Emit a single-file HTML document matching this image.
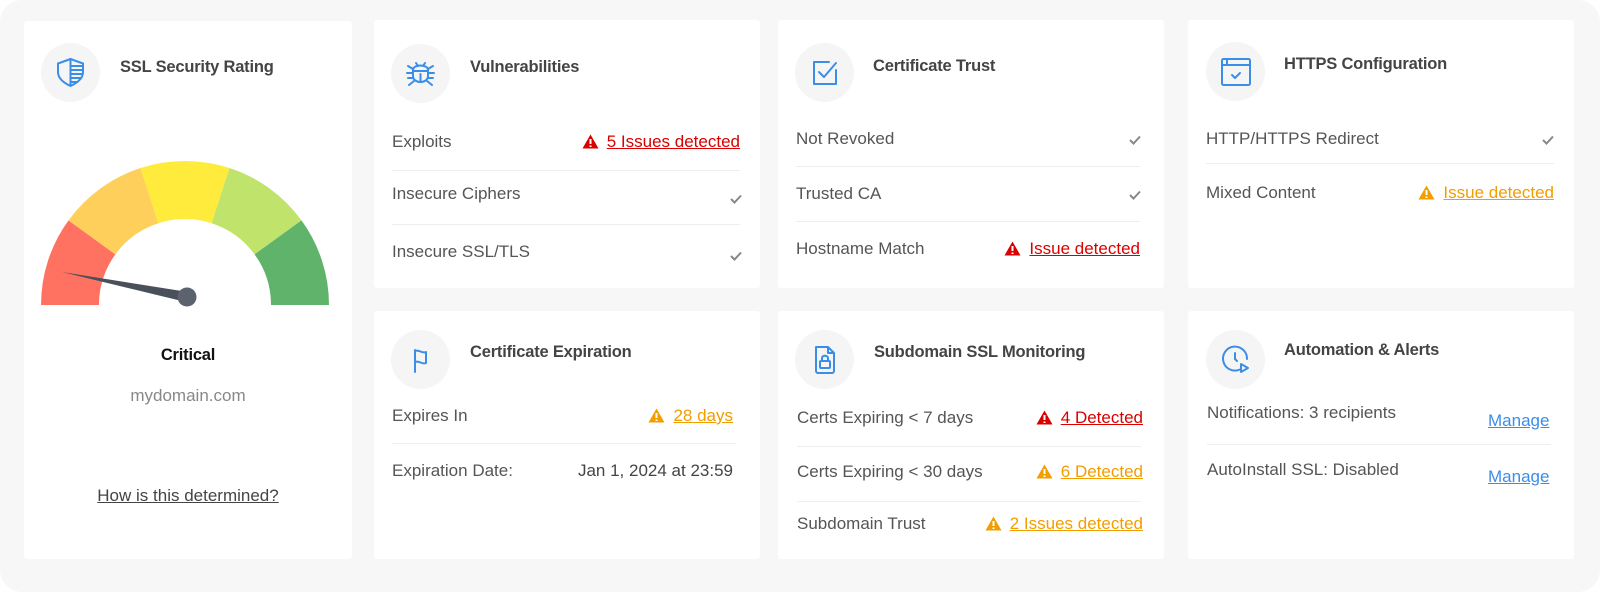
<!DOCTYPE html>
<html><head><meta charset="utf-8"><style>
*{margin:0;padding:0;box-sizing:border-box}
body{width:1600px;height:592px;background:#fff;font-family:"Liberation Sans",Arial,sans-serif;position:relative;overflow:hidden}
.bg{position:absolute;left:0;top:0;width:1600px;height:592px;background:#f7f7f7;border-radius:22px}
.card{position:absolute;background:#fff;border-radius:3px}
.t{position:absolute;height:22px;line-height:22px;font-size:17px;color:#555;white-space:nowrap}
.h{font-weight:bold;color:#444;font-size:16.5px;letter-spacing:-0.2px}
.circ{position:absolute;width:59px;height:59px;border-radius:50%;background:#f5f5f5}
.circ svg{position:absolute;left:14px;top:14px}
.div{position:absolute;height:1px;background:#eee}
.r{text-align:right}
.red{color:#d90000;text-decoration:underline}
.org{color:#f29d00;text-decoration:underline}
.blu{color:#3b8ee8;text-decoration:underline}
.ck{position:absolute;width:12px;height:10px}
.tri{display:inline-block;vertical-align:-2px;margin-right:8px}
</style></head><body>
<div class="bg"></div>

<!-- Card 1 -->
<div class="card" style="left:24px;top:21px;width:328px;height:538px"></div>
<div class="circ" style="left:41px;top:43px"><svg width="31" height="31" viewBox="0 0 31 31" fill="none" stroke="#3b8ee8" stroke-width="2"><path d="M15.5 2 L3 6.5 V15 C3 21.5 9 26 15.5 29 C22 26 28 21.5 28 15 V6.5 Z"/><path d="M15.5 2 V29 M15.5 9H28 M15.5 13H28 M15.5 17H27.5 M15.5 21H26 M15.5 25H22"/></svg></div>
<div class="t h" style="left:120px;top:56px">SSL Security Rating</div>
<svg style="position:absolute;left:0;top:0" width="360" height="320">
<g transform="translate(185,305)">
<path d="M-144 0 A144 144 0 0 1 -116.5 -84.6 L-69.6 -50.6 A86 86 0 0 0 -86 0Z" fill="#ff7262"/>
<path d="M-116.5 -84.6 A144 144 0 0 1 -44.5 -137 L-26.6 -81.8 A86 86 0 0 0 -69.6 -50.6Z" fill="#ffcf5c"/>
<path d="M-44.5 -137 A144 144 0 0 1 44.5 -137 L26.6 -81.8 A86 86 0 0 0 -26.6 -81.8Z" fill="#ffeb3b"/>
<path d="M44.5 -137 A144 144 0 0 1 116.5 -84.6 L69.6 -50.6 A86 86 0 0 0 26.6 -81.8Z" fill="#bfe36b"/>
<path d="M116.5 -84.6 A144 144 0 0 1 144 0 L86 0 A86 86 0 0 0 69.6 -50.6Z" fill="#5fb36b"/>
</g>
<path d="M62 272 L188 292 L186 302 Z" fill="#4a505a"/>
<circle cx="187" cy="297" r="9.5" fill="#5d636e"/>
</svg>
<div class="t h" style="left:24px;width:328px;top:344px;text-align:center;color:#111">Critical</div>
<div class="t" style="left:24px;width:328px;top:385px;text-align:center;color:#888">mydomain.com</div>
<div class="t" style="left:24px;width:328px;top:485px;text-align:center;color:#444;text-decoration:underline">How is this determined?</div>

<!-- Card 2 -->
<div class="card" style="left:374px;top:20px;width:386px;height:268px"></div>
<div class="circ" style="left:391px;top:44px"><svg width="31" height="31" viewBox="0 0 31 31" fill="none" stroke="#3b8ee8" stroke-width="2" stroke-linecap="round"><path d="M8 12 C8 6 23 6 23 12 V18 C23 26 8 26 8 18 Z"/><path d="M8 13H23 M15.5 16V24 M11 5 L13 8 M20 5 L18 8 M8 15H2 M23 15H29 M8 20H3 M23 20H28 M9 23 L4 27 M22 23 L27 27 M8 11 L3 8 M23 11 L28 8"/></svg></div>
<div class="t h" style="left:470px;top:56px">Vulnerabilities</div>
<div class="t" style="left:392px;top:131px">Exploits</div>
<div class="t r" style="left:520px;width:220px;top:131px"><svg class="tri" width="17" height="15" viewBox="0 0 17 15"><path d="M8.5 0.5 L16.5 14.5 H0.5Z" fill="#d90000"/><path d="M8.5 5V10M8.5 11.5V13" stroke="#fff" stroke-width="2"/></svg><span class="red">5 Issues detected</span></div>
<div class="div" style="left:392px;width:348px;top:170px"></div>
<div class="t" style="left:392px;top:183px">Insecure Ciphers</div>
<svg class="ck" style="left:730px;top:194px" viewBox="0 0 12 10"><path d="M1 5 L4.5 8.5 L11 1.5" stroke="#888" stroke-width="2" fill="none"/></svg>
<div class="div" style="left:392px;width:348px;top:224px"></div>
<div class="t" style="left:392px;top:241px">Insecure SSL/TLS</div>
<svg class="ck" style="left:730px;top:251px" viewBox="0 0 12 10"><path d="M1 5 L4.5 8.5 L11 1.5" stroke="#888" stroke-width="2" fill="none"/></svg>

<!-- Card 3 -->
<div class="card" style="left:778px;top:20px;width:386px;height:268px"></div>
<div class="circ" style="left:795px;top:43px"><svg width="31" height="31" viewBox="0 0 31 31" fill="none" stroke="#3b8ee8" stroke-width="2" stroke-linecap="round" stroke-linejoin="round"><path d="M20 5 H5 V27 H27 V13"/><path d="M10 15 L15 20 L27 6"/></svg></div>
<div class="t h" style="left:873px;top:55px">Certificate Trust</div>
<div class="t" style="left:796px;top:128px">Not Revoked</div>
<svg class="ck" style="left:1129px;top:135px" viewBox="0 0 12 10"><path d="M1 5 L4.5 8.5 L11 1.5" stroke="#888" stroke-width="2" fill="none"/></svg>
<div class="div" style="left:796px;width:344px;top:166px"></div>
<div class="t" style="left:796px;top:183px">Trusted CA</div>
<svg class="ck" style="left:1129px;top:190px" viewBox="0 0 12 10"><path d="M1 5 L4.5 8.5 L11 1.5" stroke="#888" stroke-width="2" fill="none"/></svg>
<div class="div" style="left:796px;width:344px;top:221px"></div>
<div class="t" style="left:796px;top:238px">Hostname Match</div>
<div class="t r" style="left:920px;width:220px;top:238px"><svg class="tri" width="17" height="15" viewBox="0 0 17 15"><path d="M8.5 0.5 L16.5 14.5 H0.5Z" fill="#d90000"/><path d="M8.5 5V10M8.5 11.5V13" stroke="#fff" stroke-width="2"/></svg><span class="red">Issue detected</span></div>

<!-- Card 4 -->
<div class="card" style="left:1188px;top:20px;width:386px;height:268px"></div>
<div class="circ" style="left:1206px;top:42px"><svg width="31" height="31" viewBox="0 0 31 31" fill="none" stroke="#3b8ee8" stroke-width="2" stroke-linecap="round" stroke-linejoin="round"><rect x="2" y="3" width="28" height="26" rx="1.5"/><path d="M2 9H30 M7 3V9 M12 19 L15 22 L20 17"/></svg></div>
<div class="t h" style="left:1284px;top:53px">HTTPS Configuration</div>
<div class="t" style="left:1206px;top:128px">HTTP/HTTPS Redirect</div>
<svg class="ck" style="left:1542px;top:135px" viewBox="0 0 12 10"><path d="M1 5 L4.5 8.5 L11 1.5" stroke="#888" stroke-width="2" fill="none"/></svg>
<div class="div" style="left:1206px;width:348px;top:163px"></div>
<div class="t" style="left:1206px;top:182px">Mixed Content</div>
<div class="t r" style="left:1334px;width:220px;top:182px"><svg class="tri" width="17" height="15" viewBox="0 0 17 15"><path d="M8.5 0.5 L16.5 14.5 H0.5Z" fill="#f29d00"/><path d="M8.5 5V10M8.5 11.5V13" stroke="#fff" stroke-width="2"/></svg><span class="org">Issue detected</span></div>

<!-- Card 5 -->
<div class="card" style="left:374px;top:311px;width:386px;height:248px"></div>
<div class="circ" style="left:391px;top:330px"><svg width="31" height="31" viewBox="0 0 31 31" fill="none" stroke="#3b8ee8" stroke-width="2" stroke-linecap="round" stroke-linejoin="round"><path d="M10 6 V28 M10 7 C14 5 17 10 21 8 V19 C17 21 14 16 10 18"/></svg></div>
<div class="t h" style="left:470px;top:341px">Certificate Expiration</div>
<div class="t" style="left:392px;top:405px">Expires In</div>
<div class="t r" style="left:513px;width:220px;top:405px"><svg class="tri" width="17" height="15" viewBox="0 0 17 15"><path d="M8.5 0.5 L16.5 14.5 H0.5Z" fill="#f29d00"/><path d="M8.5 5V10M8.5 11.5V13" stroke="#fff" stroke-width="2"/></svg><span class="org">28 days</span></div>
<div class="div" style="left:392px;width:344px;top:443px"></div>
<div class="t" style="left:392px;top:460px">Expiration Date:</div>
<div class="t r" style="left:513px;width:220px;top:460px;color:#444">Jan 1, 2024 at 23:59</div>

<!-- Card 6 -->
<div class="card" style="left:778px;top:311px;width:386px;height:248px"></div>
<div class="circ" style="left:795px;top:330px"><svg width="31" height="31" viewBox="0 0 31 31" fill="none" stroke="#3b8ee8" stroke-width="2" stroke-linecap="round" stroke-linejoin="round"><path d="M7 3 H19 L25 9 V27 C25 28 24 29 23 29 H9 C8 29 7 28 7 27 Z M19 3 V9 H25"/><rect x="11" y="17" width="10" height="7" rx="1"/><path d="M13 17 V14 C13 11 19 11 19 14 V17"/></svg></div>
<div class="t h" style="left:874px;top:341px">Subdomain SSL Monitoring</div>
<div class="t" style="left:797px;top:407px">Certs Expiring &lt; 7 days</div>
<div class="t r" style="left:923px;width:220px;top:407px"><svg class="tri" width="17" height="15" viewBox="0 0 17 15"><path d="M8.5 0.5 L16.5 14.5 H0.5Z" fill="#d90000"/><path d="M8.5 5V10M8.5 11.5V13" stroke="#fff" stroke-width="2"/></svg><span class="red">4 Detected</span></div>
<div class="div" style="left:797px;width:344px;top:446px"></div>
<div class="t" style="left:797px;top:461px">Certs Expiring &lt; 30 days</div>
<div class="t r" style="left:923px;width:220px;top:461px"><svg class="tri" width="17" height="15" viewBox="0 0 17 15"><path d="M8.5 0.5 L16.5 14.5 H0.5Z" fill="#f29d00"/><path d="M8.5 5V10M8.5 11.5V13" stroke="#fff" stroke-width="2"/></svg><span class="org">6 Detected</span></div>
<div class="div" style="left:797px;width:344px;top:501px"></div>
<div class="t" style="left:797px;top:513px">Subdomain Trust</div>
<div class="t r" style="left:903px;width:240px;top:513px"><svg class="tri" width="17" height="15" viewBox="0 0 17 15"><path d="M8.5 0.5 L16.5 14.5 H0.5Z" fill="#f29d00"/><path d="M8.5 5V10M8.5 11.5V13" stroke="#fff" stroke-width="2"/></svg><span class="org">2 Issues detected</span></div>

<!-- Card 7 -->
<div class="card" style="left:1188px;top:311px;width:386px;height:248px"></div>
<div class="circ" style="left:1206px;top:330px"><svg width="31" height="31" viewBox="0 0 31 31" fill="none" stroke="#3b8ee8" stroke-width="2" stroke-linecap="round" stroke-linejoin="round"><path d="M20 25.5 A12 12 0 1 1 27 15"/><path d="M15 9 V15 L17 17 M21 20 V28 L28 24 Z"/></svg></div>
<div class="t h" style="left:1284px;top:339px">Automation &amp; Alerts</div>
<div class="t" style="left:1207px;top:402px">Notifications: 3 recipients</div>
<div class="t blu" style="left:1488px;top:410px">Manage</div>
<div class="div" style="left:1207px;width:344px;top:444px"></div>
<div class="t" style="left:1207px;top:459px">AutoInstall SSL: Disabled</div>
<div class="t blu" style="left:1488px;top:466px">Manage</div>
</body></html>
